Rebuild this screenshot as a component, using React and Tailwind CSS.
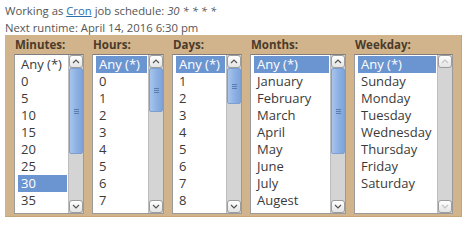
import React from 'react';

const columns = [
  {
    label: 'Minutes',
    width: 'w-[70px]',
    items: ['Any (*)', '0', '5', '10', '15', '20', '25', '30', '35'],
    selected: '30',
    thumb: 'h-[86px]',
  },
  {
    label: 'Hours',
    width: 'w-[72px]',
    items: ['Any (*)', '0', '1', '2', '3', '4', '5', '6', '7'],
    selected: 'Any (*)',
    thumb: 'h-[44px]',
  },
  {
    label: 'Days',
    width: 'w-[70px]',
    items: ['Any (*)', '1', '2', '3', '4', '5', '6', '7', '8'],
    selected: 'Any (*)',
    thumb: 'h-[36px]',
  },
  {
    label: 'Months',
    width: 'w-[96px]',
    items: ['Any (*)', 'January', 'February', 'March', 'April', 'May', 'June', 'July', 'Augest'],
    selected: 'Any (*)',
    thumb: 'h-[86px]',
  },
  {
    label: 'Weekday',
    width: 'w-[99px]',
    items: ['Any (*)', 'Sunday', 'Monday', 'Tuesday', 'Wednesday', 'Thursday', 'Friday', 'Saturday'],
    selected: 'Any (*)',
    thumb: null,
  },
];

const Chevron = ({ up, disabled }) => (
  <svg width="8" height="5" viewBox="0 0 8 5">
    <polyline
      points={up ? '1,4 4,1 7,4' : '1,1 4,4 7,1'}
      fill="none"
      stroke={disabled ? '#c4c4c4' : '#555'}
      strokeWidth="1.2"
    />
  </svg>
);

const ArrowButton = ({ up, disabled }) => (
  <div className="h-[13px] flex items-center justify-center rounded-[3px] border border-[#9c9c9c] bg-gradient-to-b from-white to-[#e4e4e4]">
    <Chevron up={up} disabled={disabled} />
  </div>
);

const Scrollbar = ({ thumb }) => (
  <div className="w-[15px] flex flex-col bg-[#d4d4d4] border-l border-[#bdbdbd]">
    <ArrowButton up disabled={!thumb} />
    <div className="flex-1 flex flex-col">
      {thumb && (
        <div className={`${thumb} rounded-[2px] border border-[#7d9fcf] bg-gradient-to-r from-[#a8c4ec] via-[#8fb2e4] to-[#7ea4dc] flex flex-col items-center justify-center gap-[1px]`}>
          <div className="w-[5px] h-[1px] bg-[#5a7cae]" />
          <div className="w-[5px] h-[1px] bg-[#5a7cae]" />
          <div className="w-[5px] h-[1px] bg-[#5a7cae]" />
        </div>
      )}
    </div>
    <ArrowButton disabled={!thumb} />
  </div>
);

const Column = ({ col }) => (
  <div className={`${col.width} flex flex-col`}>
    <div className="h-[18px] pl-[1px] text-[11.5px] font-bold leading-[18px] text-[#4a3b2b]">{col.label}:</div>
    <div className="h-[160px] flex border border-[#9a9a9a] border-t-[#7e7e7e] bg-white">
      <div className="flex-1 pl-[3px] pr-[1px] pt-[1px] overflow-hidden">
        {col.items.map((item) => (
          <div
            key={item}
            className={`h-[17px] px-[3px] text-[13px] leading-[17px] whitespace-nowrap ${
              item === col.selected ? 'bg-[#6b95d0] text-white' : 'text-[#3a3a3a]'
            }`}
          >
            {item}
          </div>
        ))}
      </div>
      <Scrollbar thumb={col.thumb} />
    </div>
  </div>
);

export default function App() {
  return (
    <div className="w-[474px] h-[225px] bg-white px-[5px] pt-[2px] font-['Open_Sans',sans-serif] text-[11.3px] leading-[17px] text-[#555]">
      <div>
        Working as <a className="text-[#2b6fae] underline">Cron</a> job schedule: <em>30 * * * *</em>
      </div>
      <div>Next runtime: April 14, 2016 6:30 pm</div>
      <div className="mt-[-1px] w-[457px] flex gap-[8px] bg-[#d2b48c] border-r border-b border-[#c5a478] pl-[9px] pt-[1px] pb-[2px]">
        {columns.map((col) => (
          <Column key={col.label} col={col} />
        ))}
      </div>
    </div>
  );
}
